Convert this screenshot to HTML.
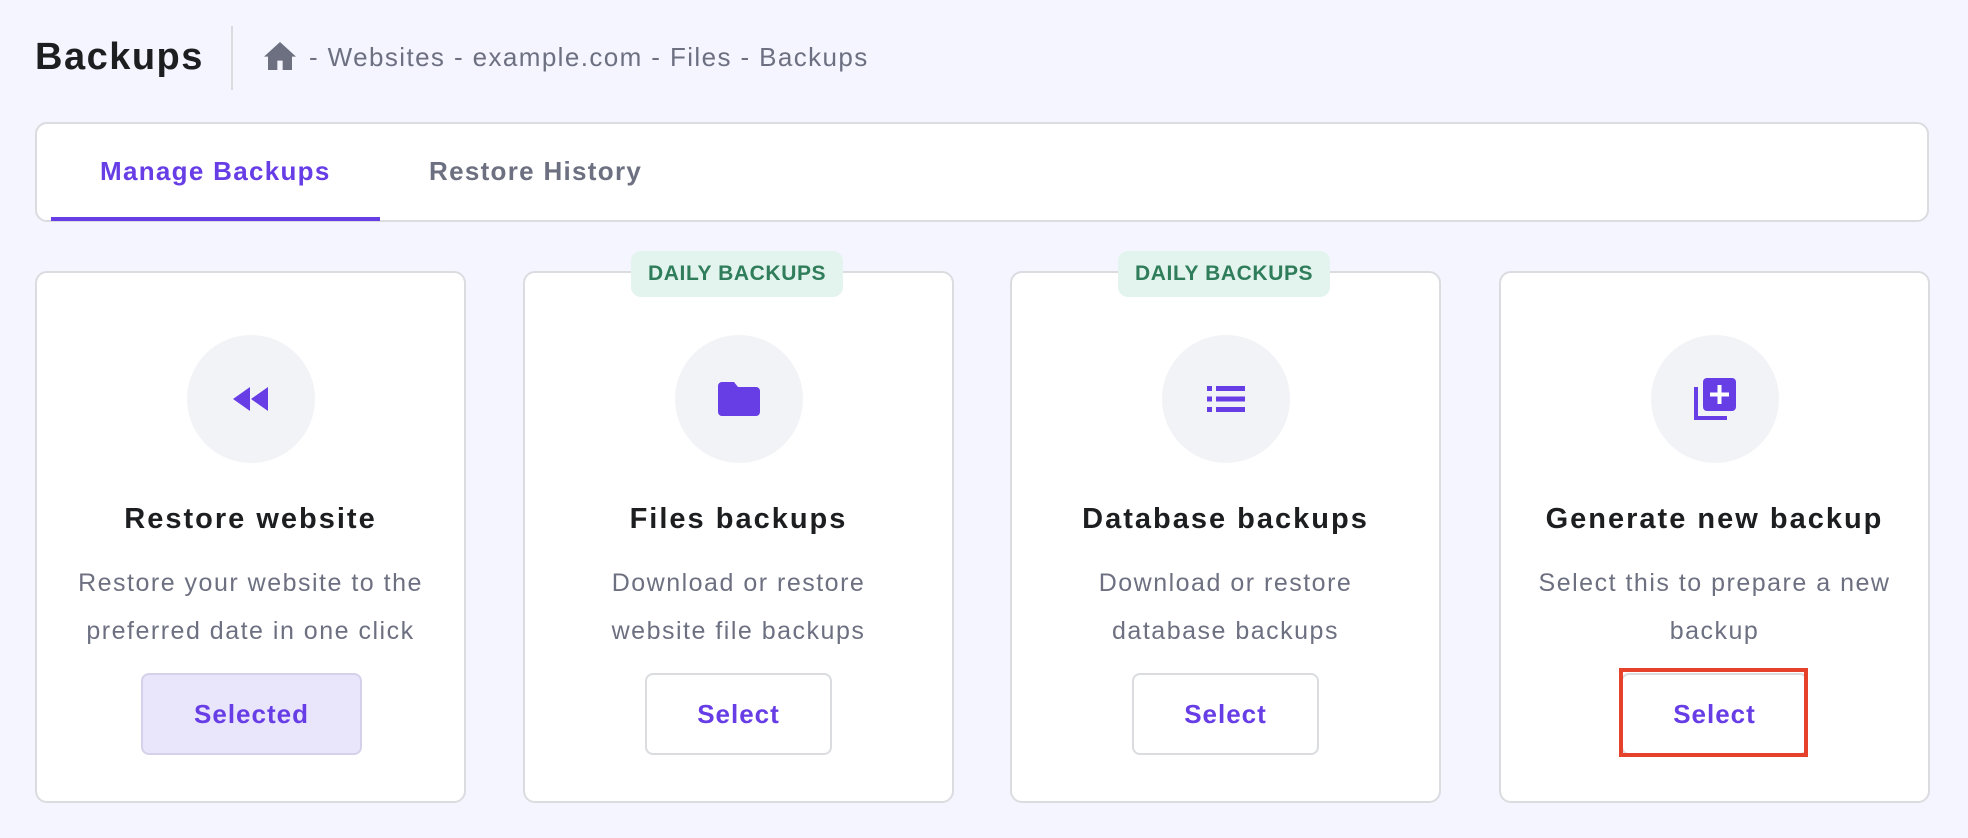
<!DOCTYPE html>
<html><head><meta charset="utf-8"><style>
*{box-sizing:border-box;margin:0;padding:0}
body{width:1968px;height:838px;background:#f4f5ff;font-family:"Liberation Sans",sans-serif;position:relative;overflow:hidden;color:#1d1e20}
.abs{position:absolute}
h1{position:absolute;left:35px;top:36px;font-size:38px;font-weight:700;letter-spacing:1.5px}
.div{left:231px;top:26px;width:2px;height:64px;background:#dadce0}
.crumb{left:309px;top:42px;font-size:26px;color:#6d7081;letter-spacing:1.4px;white-space:nowrap}
.panel{left:35px;top:122px;width:1894px;height:100px;background:#fff;border:2px solid #dadce0;border-radius:12px}
.tab{top:156px;font-size:26px;font-weight:700;letter-spacing:1.3px}
.ul{left:51px;top:217px;width:329px;height:4px;background:#673de6}
.card{top:271px;width:431px;height:532px;background:#fff;border:2px solid #dadce0;border-radius:12px}
.circ{position:absolute;left:150px;top:62px;width:128px;height:128px;border-radius:50%;background:#f2f3f6;display:flex;align-items:center;justify-content:center}
.t{position:absolute;left:0;right:0;top:230px;text-align:center;font-size:29px;font-weight:700;letter-spacing:2px;white-space:nowrap}
.d{position:absolute;left:0;right:0;top:286px;text-align:center;font-size:25px;line-height:48px;color:#6d7081;letter-spacing:1.5px;white-space:nowrap}
.btn{position:absolute;top:400px;height:82px;border:2px solid #dadce0;border-radius:8px;display:flex;align-items:center;justify-content:center;font-size:26px;font-weight:700;color:#673de6;background:#fff;letter-spacing:1px}
.badge{top:251px;height:46px;padding:0 17px;background:#e3f4ee;border-radius:10px;color:#2f7d5a;font-weight:700;font-size:21px;line-height:46px;letter-spacing:0.6px}
</style></head><body>
<h1>Backups</h1>
<div class="abs div"></div>
<svg class="abs" style="left:264px;top:42px" width="32" height="28" viewBox="0 0 24 21"><path d="M12 0L0 11h3v10h7v-7h4v7h7V11h3z" fill="#6d7081"/></svg>
<div class="abs crumb">- Websites - example.com - Files - Backups</div>
<div class="abs panel"></div>
<div class="abs tab" style="left:100px;color:#673de6">Manage Backups</div>
<div class="abs tab" style="left:429px;color:#6d7081">Restore History</div>
<div class="abs ul"></div>

<div class="abs card" style="left:35px">
 <div class="circ"><svg width="40" height="28" viewBox="0 0 40 28"><path d="M19 2L2 14l17 12zM37 2L20 14l17 12z" fill="#673de6"/></svg></div>
 <div class="t">Restore website</div>
 <div class="d">Restore your website to the<br>preferred date in one click</div>
 <div class="btn" style="left:104px;width:221px;background:#e9e5fb;border-color:#d6d1ea">Selected</div>
</div>
<div class="abs card" style="left:523px">
 <div class="circ"><svg width="42" height="34" viewBox="0 0 42 34"><path d="M4 0h12l4 5h18a4 4 0 0 1 4 4v21a4 4 0 0 1-4 4H4a4 4 0 0 1-4-4V4a4 4 0 0 1 4-4z" fill="#673de6"/></svg></div>
 <div class="t">Files backups</div>
 <div class="d">Download or restore<br>website file backups</div>
 <div class="btn" style="left:120px;width:187px">Select</div>
</div>
<div class="abs card" style="left:1010px">
 <div class="circ"><svg width="38" height="26" viewBox="0 0 38 26"><g fill="#673de6"><rect x="0" y="0" width="5" height="5"/><rect x="9" y="0" width="29" height="5"/><rect x="0" y="10.5" width="5" height="5"/><rect x="9" y="10.5" width="29" height="5"/><rect x="0" y="21" width="5" height="5"/><rect x="9" y="21" width="29" height="5"/></g></svg></div>
 <div class="t">Database backups</div>
 <div class="d">Download or restore<br>database backups</div>
 <div class="btn" style="left:120px;width:187px">Select</div>
</div>
<div class="abs card" style="left:1499px">
 <div class="circ"><svg width="42" height="42" viewBox="0 0 42 42"><path d="M2 9v31h31" stroke="#673de6" stroke-width="4" fill="none"/><rect x="9" y="0" width="33" height="33" rx="4" fill="#673de6"/><path d="M25.5 7v19M16 16.5h19" stroke="#fff" stroke-width="4"/></svg></div>
 <div class="t">Generate new backup</div>
 <div class="d">Select this to prepare a new<br>backup</div>
 <div class="btn" style="left:120px;width:187px">Select</div>
</div>
<div class="abs" style="left:1619px;top:668px;width:189px;height:89px;border:4px solid #e5412b"></div>
<div class="abs badge" style="left:631px">DAILY BACKUPS</div>
<div class="abs badge" style="left:1118px">DAILY BACKUPS</div>
</body></html>
